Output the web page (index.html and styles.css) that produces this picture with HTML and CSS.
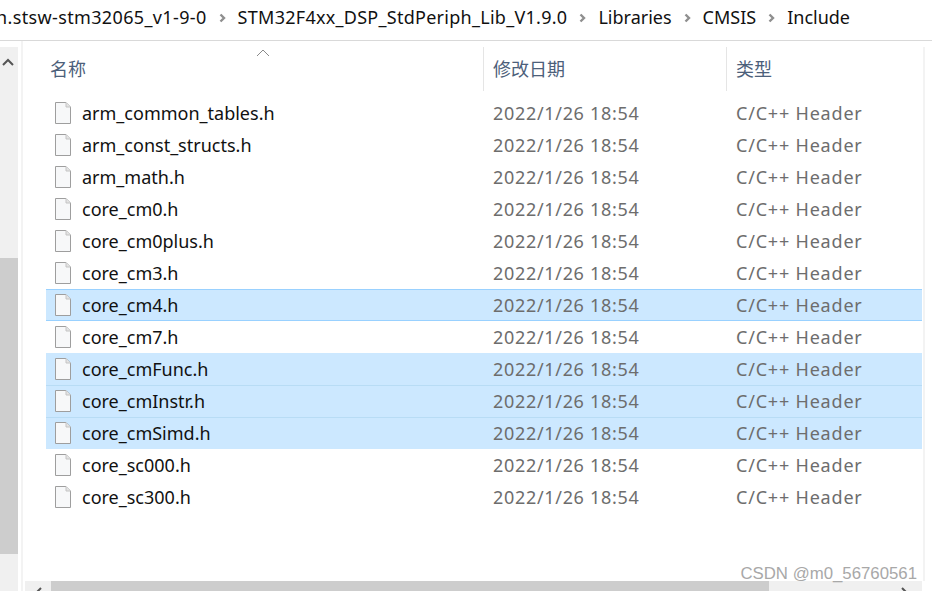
FILE: index.html
```html
<!DOCTYPE html>
<html lang="zh">
<head>
<meta charset="utf-8">
<title>Include</title>
<link rel="stylesheet" href="styles.css">
</head>
<body>
<svg class="defs" width="0" height="0" aria-hidden="true">
  <symbol id="file" viewBox="0 0 18 24">
    <path d="M1.5 1.5H12L16.5 6V22.5H1.5Z" fill="#f7f8f9" stroke="#9e9e9e"/>
    <path d="M12 1.5V6H16.5" fill="#e4e4e4" stroke="#c4c4c4"/>
  </symbol>
  <symbol id="chev" viewBox="0 0 8 12">
    <path d="M1.5 2.5L5 6L1.5 9.5" fill="none" stroke="#8f8f8f" stroke-width="2.4"/>
  </symbol>
</svg>
<nav class="crumbs">
  <span class="crumb first">n.stsw-stm32065_v1-9-0</span>
  <svg class="sep"><use href="#chev"/></svg>
  <span class="crumb second">STM32F4xx_DSP_StdPeriph_Lib_V1.9.0</span>
  <svg class="sep"><use href="#chev"/></svg>
  <span class="crumb">Libraries</span>
  <svg class="sep"><use href="#chev"/></svg>
  <span class="crumb">CMSIS</span>
  <svg class="sep"><use href="#chev"/></svg>
  <span class="crumb">Include</span>
</nav>
<main class="main">
  <aside class="vscroll">
    <svg class="vup" viewBox="0 0 14 10"><path d="M2 8L7 3L12 8" fill="none" stroke="#555" stroke-width="2"/></svg>
    <div class="vthumb"></div>
  </aside>
  <section class="pane">
    <div class="content">
      <header class="head">
        <div class="col name">名称
          <svg class="sort" viewBox="0 0 14 8"><path d="M1 7L7 1L13 7" fill="none" stroke="#8a8a8a"/></svg>
        </div>
        <div class="col date">修改日期</div>
        <div class="col type">类型</div>
      </header>
      <div class="rows">
        <div class="row"><svg class="ico"><use href="#file"/></svg><span class="fname">arm_common_tables.h</span><span class="fdate">2022/1/26 18:54</span><span class="ftype">C/C++ Header</span></div>
        <div class="row"><svg class="ico"><use href="#file"/></svg><span class="fname">arm_const_structs.h</span><span class="fdate">2022/1/26 18:54</span><span class="ftype">C/C++ Header</span></div>
        <div class="row"><svg class="ico"><use href="#file"/></svg><span class="fname">arm_math.h</span><span class="fdate">2022/1/26 18:54</span><span class="ftype">C/C++ Header</span></div>
        <div class="row"><svg class="ico"><use href="#file"/></svg><span class="fname">core_cm0.h</span><span class="fdate">2022/1/26 18:54</span><span class="ftype">C/C++ Header</span></div>
        <div class="row"><svg class="ico"><use href="#file"/></svg><span class="fname">core_cm0plus.h</span><span class="fdate">2022/1/26 18:54</span><span class="ftype">C/C++ Header</span></div>
        <div class="row"><svg class="ico"><use href="#file"/></svg><span class="fname">core_cm3.h</span><span class="fdate">2022/1/26 18:54</span><span class="ftype">C/C++ Header</span></div>
        <div class="row focus"><svg class="ico"><use href="#file"/></svg><span class="fname">core_cm4.h</span><span class="fdate">2022/1/26 18:54</span><span class="ftype">C/C++ Header</span></div>
        <div class="row"><svg class="ico"><use href="#file"/></svg><span class="fname">core_cm7.h</span><span class="fdate">2022/1/26 18:54</span><span class="ftype">C/C++ Header</span></div>
        <div class="row sel"><svg class="ico"><use href="#file"/></svg><span class="fname">core_cmFunc.h</span><span class="fdate">2022/1/26 18:54</span><span class="ftype">C/C++ Header</span></div>
        <div class="row sel"><svg class="ico"><use href="#file"/></svg><span class="fname">core_cmInstr.h</span><span class="fdate">2022/1/26 18:54</span><span class="ftype">C/C++ Header</span></div>
        <div class="row sel"><svg class="ico"><use href="#file"/></svg><span class="fname">core_cmSimd.h</span><span class="fdate">2022/1/26 18:54</span><span class="ftype">C/C++ Header</span></div>
        <div class="row"><svg class="ico"><use href="#file"/></svg><span class="fname">core_sc000.h</span><span class="fdate">2022/1/26 18:54</span><span class="ftype">C/C++ Header</span></div>
        <div class="row"><svg class="ico"><use href="#file"/></svg><span class="fname">core_sc300.h</span><span class="fdate">2022/1/26 18:54</span><span class="ftype">C/C++ Header</span></div>
      </div>
    </div>
    <div class="hscroll">
      <svg class="harrow" viewBox="0 0 10 14"><path d="M8 2L3 7L8 12" fill="none" stroke="#555" stroke-width="2"/></svg>
      <div class="hthumb"></div>
      <svg class="harrow right" viewBox="0 0 10 14"><path d="M2 2L7 7L2 12" fill="none" stroke="#555" stroke-width="2"/></svg>
    </div>
  </section>
</main>
<div class="mark">CSDN @m0_56760561</div>
</body>
</html>
```
FILE: styles.css
```css
* { box-sizing: border-box; }
html, body { margin: 0; height: 591px; overflow: hidden; background: #fff; }
body {
  position: relative;
  display: flex;
  flex-direction: column;
  width: 932px;
  font-family: "Noto Sans", "Noto Sans CJK SC", sans-serif;
  font-size: 18px;
}
.defs { position: absolute; }
.crumbs {
  height: 41px;
  flex: none;
  display: flex;
  align-items: center;
  border-bottom: 1px solid #d9d9d9;
  color: #111;
  white-space: nowrap;
  overflow: hidden;
  padding-bottom: 6px;
}
.crumb.first { margin-left: -4px; letter-spacing: .36px; }
.crumb.second { letter-spacing: .27px; }
.sep { width: 8px; height: 12px; margin: 2px 11px 0 12px; flex: none; }
.main { flex: 1; display: flex; min-height: 0; padding-top: 6px; }
.vscroll {
  width: 18px;
  flex: none;
  background: #f0f0f0;
  display: flex;
  flex-direction: column;
}
.vup { width: 14px; height: 10px; margin: 10px 0 0 1px; flex: none; }
.vthumb { height: 296px; background: #cdcdcd; margin-top: 191px; }
.pane {
  flex: 1;
  margin-left: 3px;
  margin-top: -6px;
  border-left: 2px solid #f3f3f3;
  display: flex;
  flex-direction: column;
  min-width: 0;
  padding-top: 6px;
}
.content { flex: 1; border-right: 2px solid #f3f3f3; margin-right: 7px; }
.head { display: grid; grid-template-columns: 460px 243px 1fr; height: 41px; }
.col { color: #4c607a; line-height: 44px; position: relative; font-size: 18px; }
.col.name { padding-left: 27px; }
.col.date, .col.type { border-left: 1px solid #e5e5e5; padding-left: 9px; }
.sort { position: absolute; left: 233px; top: 2px; width: 14px; height: 8px; }
.rows { margin: 9px 1px 0 23px; }
.row {
  height: 32px;
  display: grid;
  grid-template-columns: 28px 411px 243px 1fr;
  align-items: center;
  padding-left: 8px;
}
.row.focus { background: #cce8ff; border-top: 1px solid #99d1ff; border-bottom: 1px solid #99d1ff; }
.row.sel { background: #cce8ff; }
.row.sel + .row.sel { box-shadow: inset 0 1px 0 #b8dcf5; }
.ico { width: 18px; height: 24px; }
.fname { color: #111; }
.fdate { color: #6d6d6d; letter-spacing: .68px; }
.ftype { color: #6d6d6d; letter-spacing: .8px; }
.hscroll {
  height: 10px;
  flex: none;
  margin: 0 10px 0 2px;
  background: #f0f0f0;
  display: flex;
  align-items: flex-start;
  overflow: hidden;
}
.harrow { width: 10px; height: 14px; margin: 5px 8px; flex: none; }
.hthumb { width: 718px; height: 10px; background: #cdcdcd; }
.harrow.right { margin-left: auto; margin-right: 12px; }
.mark {
  position: absolute;
  right: 15px;
  top: 564px;
  font-family: "Liberation Sans", sans-serif;
  font-size: 16.8px;
  color: #a8a8a8;
}
```
